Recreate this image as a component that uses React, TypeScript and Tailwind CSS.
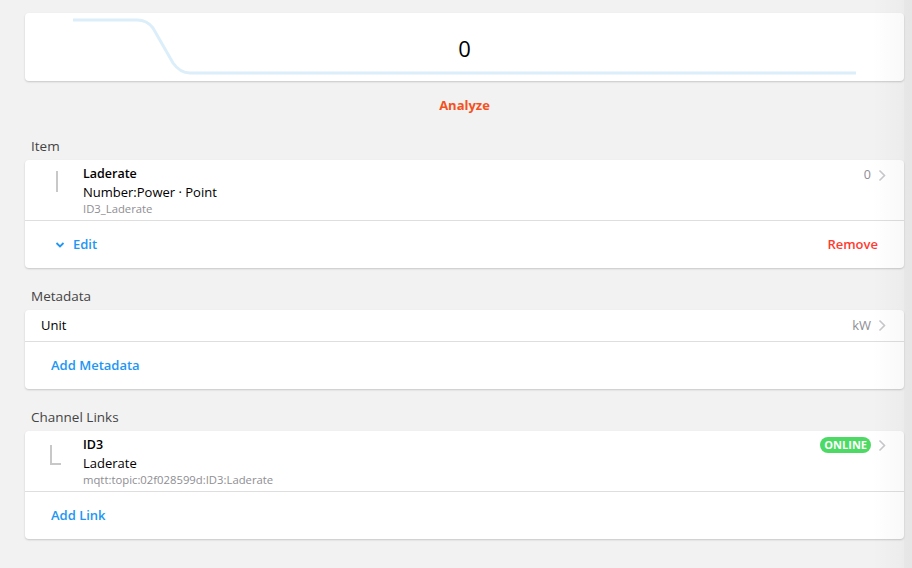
import React from "react";

const Chevron = () => (
  <svg width="8" height="13" viewBox="0 0 8 13" className="ml-[7px]">
    <path d="M1.5 1.5 L6.5 6.5 L1.5 11.5" fill="none" stroke="#c7c7cc" strokeWidth="1.6" />
  </svg>
);

const Label = ({ children }: { children: React.ReactNode }) => (
  <div className="px-[6px] h-[30px] flex items-end pb-[4px] text-[13.5px] font-medium text-[#444]">{children}</div>
);

export default function App() {
  return (
    <div
      className="relative w-[912px] h-[568px] overflow-hidden bg-[#f2f2f2] text-black"
      style={{ fontFamily: '"Open Sans", "Noto Sans", sans-serif' }}
    >
      <div className="pl-[25px] pr-[8px] pt-[13px]">
        {/* chart card */}
        <div className="relative h-[68px] bg-white rounded-[4px] shadow-[0_1px_2px_rgba(0,0,0,0.18)]">
          <svg className="absolute left-0 top-0" width="879" height="68" viewBox="0 0 879 68">
            <path
              d="M48 7 L112 7 Q122 7 128 15 L148 50 Q155 60 165 60 L831 60"
              fill="none"
              stroke="#dbeefa"
              strokeWidth="3"
            />
          </svg>
          <div className="absolute inset-0 flex items-center justify-center text-[22px] pt-[2px]">0</div>
        </div>

        <div className="h-[49px] flex items-center justify-center text-[13px] font-bold text-[#f4511e] pt-[1px]">
          Analyze
        </div>

        <div>
          <Label>Item</Label>
          <div className="bg-white rounded-[4px] shadow-[0_1px_2px_rgba(0,0,0,0.18)]">
            <div className="flex h-[61px] border-b border-[#dedede]">
              <div className="w-[58px] flex justify-center pt-[11px]">
                <div className="w-[2px] h-[21px] bg-[#c8c8c8] ml-[5px]" />
              </div>
              <div className="flex-1 pt-[5px] leading-[18px]">
                <div className="text-[12.5px] font-semibold">Laderate</div>
                <div className="text-[13px]">Number:Power · Point</div>
                <div className="text-[11.3px] text-[#8e8e93] leading-[16px]">ID3_Laderate</div>
              </div>
              <div className="flex items-start pt-[6px] pr-[18px] text-[12.5px] text-[#8e8e93]">
                0<span className="mt-[3px]"><Chevron /></span>
              </div>
            </div>
            <div className="flex h-[47px] items-center pl-[30px] pr-[26px]">
              <svg width="10" height="8" viewBox="0 0 10 8" className="mr-[8px] mt-[1px]">
                <path d="M1.5 2 L5 5.5 L8.5 2" fill="none" stroke="#2196f3" strokeWidth="1.8" />
              </svg>
              <span className="text-[13px] font-semibold text-[#2196f3]">Edit</span>
              <span className="ml-auto text-[13px] font-semibold text-[#ff3b30]">Remove</span>
            </div>
          </div>

          <div className="h-[12px]" />
          <Label>Metadata</Label>
          <div className="bg-white rounded-[4px] shadow-[0_1px_2px_rgba(0,0,0,0.18)]">
            <div className="flex h-[32px] items-center pl-[16px] pr-[18px] border-b border-[#dedede]">
              <span className="text-[13px]">Unit</span>
              <span className="ml-auto text-[13px] text-[#8e8e93] flex items-center">
                kW<Chevron />
              </span>
            </div>
            <div className="flex h-[47px] items-center pl-[26px]">
              <span className="text-[13px] font-semibold text-[#2196f3]">Add Metadata</span>
            </div>
          </div>

          <div className="h-[12px]" />
          <Label>Channel Links</Label>
          <div className="bg-white rounded-[4px] shadow-[0_1px_2px_rgba(0,0,0,0.18)]">
            <div className="flex h-[61px] border-b border-[#dedede]">
              <div className="w-[58px] flex justify-center pt-[14px]">
                <div className="w-[11px] h-[20px] border-l-2 border-b-2 border-[#c8c8c8] ml-[3px]" />
              </div>
              <div className="flex-1 pt-[5px] leading-[18px]">
                <div className="text-[12.5px] font-semibold">ID3</div>
                <div className="text-[13px]">Laderate</div>
                <div className="text-[11.3px] text-[#8e8e93] leading-[16px]">mqtt:topic:02f028599d:ID3:Laderate</div>
              </div>
              <div className="flex items-start pt-[6px] pr-[18px]">
                <span className="bg-[#4cd964] text-white text-[11px] font-bold rounded-full px-[4px] h-[16px] leading-[16px]">
                  ONLINE
                </span>
                <span className="mt-[2px]"><Chevron /></span>
              </div>
            </div>
            <div className="flex h-[47px] items-center pl-[26px]">
              <span className="text-[13px] font-semibold text-[#2196f3]">Add Link</span>
            </div>
          </div>
        </div>
      </div>
      <div className="absolute right-0 top-0 h-full w-[40px] bg-gradient-to-r from-transparent to-[rgba(0,0,0,0.03)] pointer-events-none" />
      <div className="absolute right-0 top-0 h-full w-[8px] bg-[rgba(0,0,0,0.02)] pointer-events-none" />
    </div>
  );
}
